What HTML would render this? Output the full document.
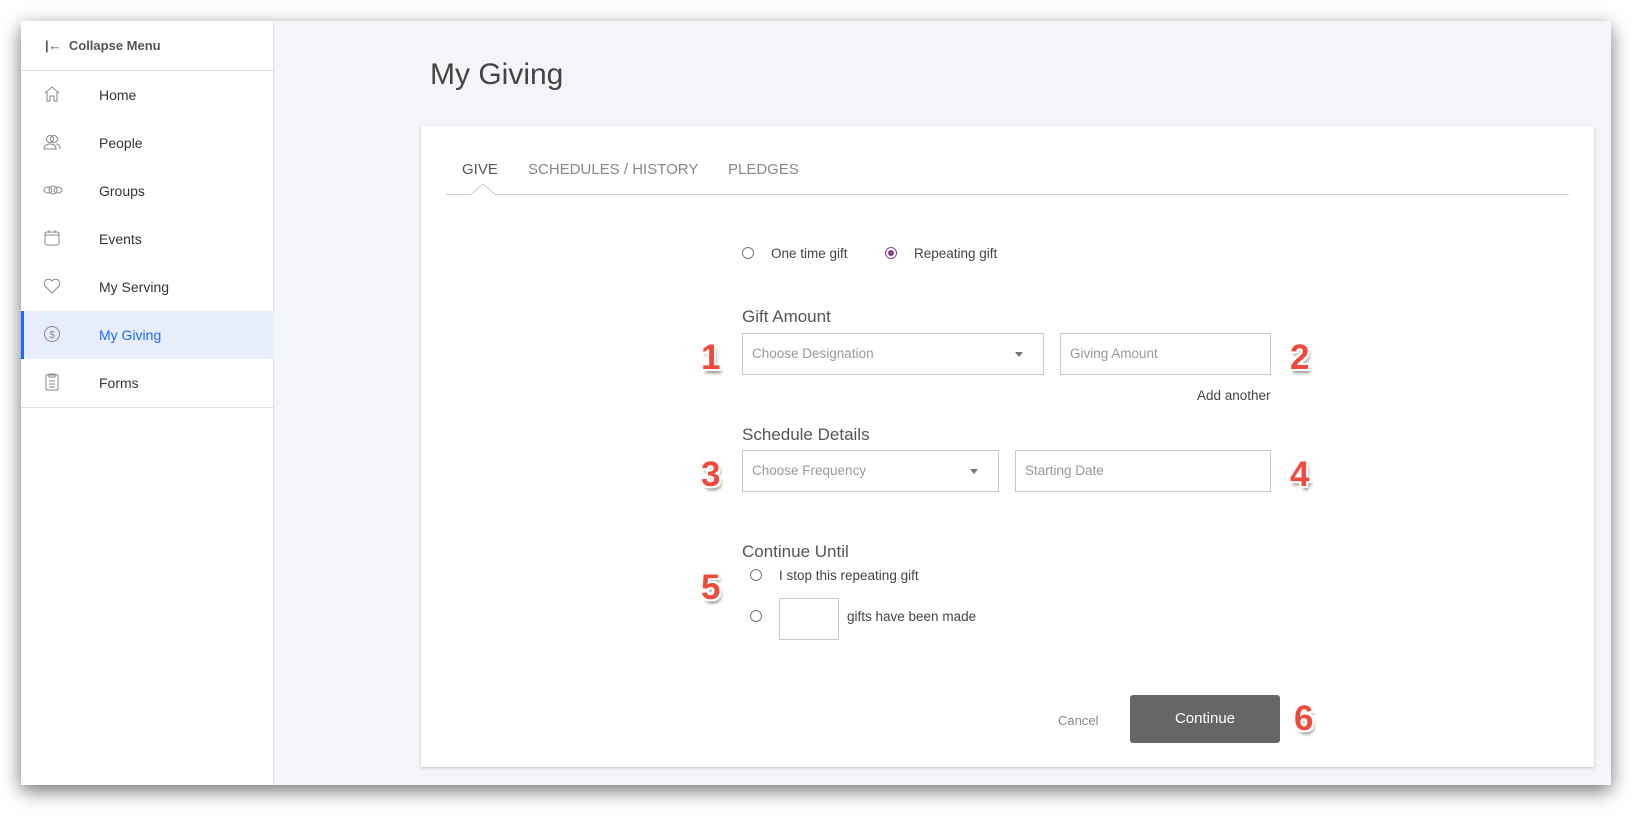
<!DOCTYPE html>
<html><head><meta charset="utf-8"><style>
*{box-sizing:border-box;margin:0;padding:0}
body{width:1642px;height:816px;background:#fff;font-family:"Liberation Sans",sans-serif;position:relative;overflow:hidden}
.win{position:absolute;left:21px;top:21px;width:1590px;height:764px;background:#f4f5f9;box-shadow:0 6px 18px rgba(0,0,0,.55)}
.side{position:absolute;left:0;top:0;width:253px;height:100%;background:#fff;border-right:1px solid #e3e3e6}
.abs{position:absolute}
.row{position:absolute;left:0;width:253px;height:48px;font-size:14px;color:#333}
.row span{position:absolute;left:78px;top:16px}
.row svg{position:absolute;left:22px;top:14px}
.card{position:absolute;left:400px;top:105px;width:1173px;height:641px;background:#fff;box-shadow:0 1px 3px rgba(0,0,0,.2)}
.in{position:absolute;border:1px solid #c8c8c8;background:#fff;font-size:13.5px;color:#999;padding:12px 0 0 9px}
.lbl{position:absolute;font-size:17px;color:#555}
.t{position:absolute;font-size:13.5px;color:#444}
.rad{position:absolute;width:12px;height:12px;border:1px solid #777;border-radius:50%;background:#fff}
.num{position:absolute;font:bold 35px "Liberation Sans",sans-serif;color:#f04a3c;text-shadow:-2px 0 #fff,2px 0 #fff,0 -2px #fff,0 2px #fff,-2px -2px #fff,2px 2px #fff,-2px 2px #fff,2px -2px #fff,2px 4px 3px rgba(0,0,0,.45)}
.arr{position:absolute;width:0;height:0;border-left:4px solid transparent;border-right:4px solid transparent;border-top:5px solid #777}
</style></head><body>
<div class="win">
 <div class="side">
  <div class="abs" style="left:24px;top:17px;font-size:13px;color:#555;font-weight:bold">|← &nbsp;Collapse Menu</div>
  <div class="abs" style="left:0;top:49px;width:253px;border-top:1px solid #ddd"></div>
  <div class="row" style="top:50px"><svg width="18" height="18" viewBox="0 0 18 18" fill="none" stroke="#888"><path d="M2 8L9 2l7 6M4 7v9h3v-5h4v5h3V7"/></svg><span>Home</span></div>
  <div class="row" style="top:98px"><svg width="18" height="18" viewBox="0 0 18 18" fill="none" stroke="#888"><circle cx="7" cy="6" r="3.5"/><circle cx="11" cy="6" r="3.5"/><path d="M1 16c0-4 3-5 6-5s6 1 6 5zM13 11c2 0 4 1 4 5"/></svg><span>People</span></div>
  <div class="row" style="top:146px"><svg width="20" height="18" viewBox="0 0 20 18" fill="none" stroke="#888"><ellipse cx="5" cy="9" rx="4" ry="3"/><ellipse cx="15" cy="9" rx="4" ry="3"/><circle cx="10" cy="9" r="4"/></svg><span>Groups</span></div>
  <div class="row" style="top:194px"><svg width="18" height="18" viewBox="0 0 18 18" fill="none" stroke="#888"><rect x="2" y="3" width="14" height="13" rx="2"/><path d="M2 6h14M6 1v3M12 1v3"/></svg><span>Events</span></div>
  <div class="row" style="top:242px"><svg width="18" height="18" viewBox="0 0 18 18" fill="none" stroke="#888"><path d="M9 16L2 9a4 4 0 0 1 7-5 4 4 0 0 1 7 5z"/></svg><span>My Serving</span></div>
  <div class="row" style="top:290px;background:#e8edfb;border-left:3px solid #1a6aff"><svg width="18" height="18" viewBox="0 0 18 18" fill="none" stroke="#888" style="left:19px"><circle cx="9" cy="9" r="7.5"/><text x="9" y="13" font-size="10" text-anchor="middle" fill="#888" stroke="none" font-family="Liberation Sans">$</text></svg><span style="left:75px;color:#1a6aff">My Giving</span></div>
  <div class="row" style="top:338px"><svg width="18" height="18" viewBox="0 0 18 18" fill="none" stroke="#888"><rect x="3" y="2" width="12" height="15"/><path d="M6 1h6v3H6zM6 8h6M6 11h6M6 14h6"/></svg><span>Forms</span></div>
  <div class="abs" style="left:0;top:386px;width:253px;border-top:1px solid #ddd"></div>
 </div>
 <div class="abs" style="left:409px;top:37px;font-size:30px;color:#444">My Giving</div>
 <div class="card">
  <div class="abs" style="left:41px;top:35px;font-size:15px;color:#555">GIVE</div>
  <div class="abs" style="left:107px;top:35px;font-size:15px;color:#888">SCHEDULES / HISTORY</div>
  <div class="abs" style="left:307px;top:35px;font-size:15px;color:#888">PLEDGES</div>
  <div class="abs" style="left:25px;top:68px;width:1123px;border-top:1px solid #ccc"></div>
  <svg class="abs" style="left:49px;top:57px" width="26" height="13"><path d="M0 12L13 1l13 11" fill="#fff" stroke="#ccc"/></svg>
  <div class="rad" style="left:321px;top:121px"></div><div class="t" style="left:350px;top:120px">One time gift</div>
  <div class="rad" style="left:464px;top:121px;border-color:#8e3b96"><div style="margin:2px;width:6px;height:6px;border-radius:50%;background:#8e3b96"></div></div><div class="t" style="left:493px;top:120px">Repeating gift</div>
  <div class="lbl" style="left:321px;top:181px">Gift Amount</div>
  <div class="in" style="left:321px;top:207px;width:302px;height:42px">Choose Designation</div><div class="arr" style="left:594px;top:226px"></div>
  <div class="in" style="left:639px;top:207px;width:211px;height:42px">Giving Amount</div>
  <div class="t" style="left:776px;top:262px">Add another</div>
  <div class="lbl" style="left:321px;top:299px">Schedule Details</div>
  <div class="in" style="left:321px;top:324px;width:257px;height:42px">Choose Frequency</div><div class="arr" style="left:549px;top:343px"></div>
  <div class="in" style="left:594px;top:324px;width:256px;height:42px">Starting Date</div>
  <div class="lbl" style="left:321px;top:416px">Continue Until</div>
  <div class="rad" style="left:329px;top:443px"></div><div class="t" style="left:358px;top:442px">I stop this repeating gift</div>
  <div class="rad" style="left:329px;top:484px"></div>
  <div class="abs" style="left:358px;top:472px;width:60px;height:42px;border:1px solid #c8c8c8"></div>
  <div class="t" style="left:426px;top:483px">gifts have been made</div>
  <div class="abs" style="left:637px;top:587px;font-size:13px;color:#888">Cancel</div>
  <div class="abs" style="left:709px;top:569px;width:150px;height:48px;background:#666;border-radius:3px;color:#fff;font-size:15px;text-align:center;line-height:48px">Continue</div>
  <div class="num" style="left:280px;top:212px">1</div>
  <div class="num" style="left:869px;top:212px">2</div>
  <div class="num" style="left:280px;top:329px">3</div>
  <div class="num" style="left:869px;top:329px">4</div>
  <div class="num" style="left:280px;top:442px">5</div>
  <div class="num" style="left:873px;top:573px">6</div>
 </div>
</div>
</body></html>
